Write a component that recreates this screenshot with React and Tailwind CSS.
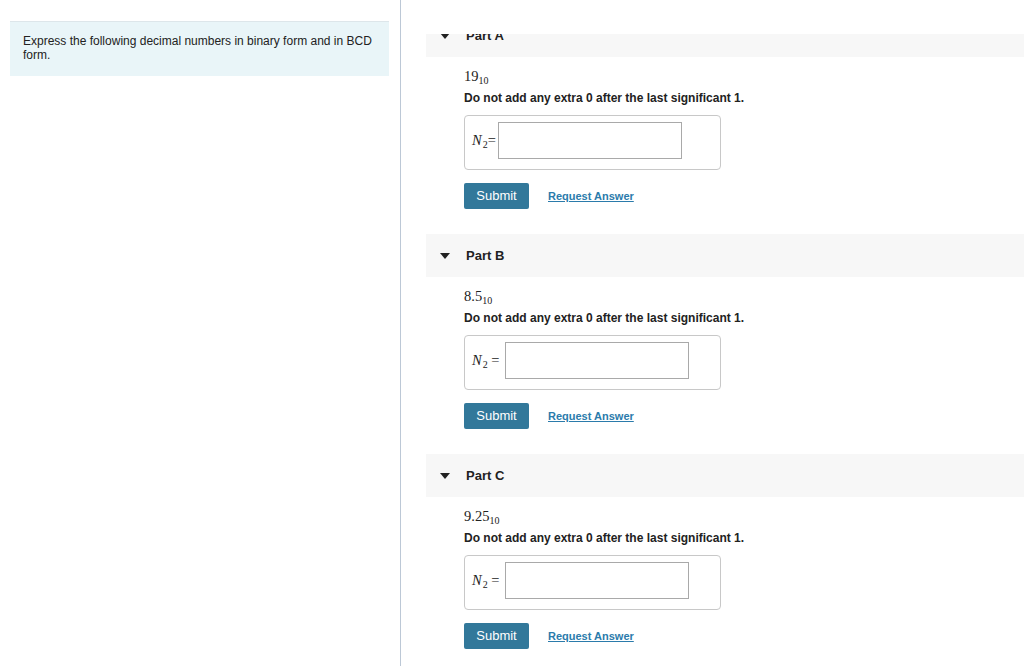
import React from 'react';

const parts = [
    { name: 'Part A', num: '19', eqSpace: false },
    { name: 'Part B', num: '8.5', eqSpace: true },
    { name: 'Part C', num: '9.25', eqSpace: true },
];

const serif = { fontFamily: '"Liberation Serif", "DejaVu Serif", serif' };

const PartBlock = ({ part }) => (
    <div className="mb-[25px]">
        <div className="ml-[25px] h-[43px] bg-[#f7f7f7] flex items-center pl-[14px]">
            <svg width="10" height="6" viewBox="0 0 10 6" className="mr-[16px]">
                <path d="M0 0 L10 0 L5 6 Z" fill="#222" />
            </svg>
            <span className="text-[13px] font-bold text-[#222]">{part.name}</span>
        </div>
        <div className="pl-[63px]">
            <div className="mt-[9px] h-[20px] leading-[20px] text-[14.5px] text-[#222]" style={serif}>
                {part.num}
                <sub className="text-[10px] align-baseline relative top-[3px]">10</sub>
            </div>
            <div className="mt-[5px] leading-[14px] text-[12px] font-bold text-[#222] whitespace-nowrap">
                Do not add any extra 0 after the last significant 1.
            </div>
            <div className="mt-[10px] w-[257px] h-[55px] border border-[#c8c8c8] rounded-[4px] flex items-start pt-[6px] pl-[7px]">
                <span className="text-[14.5px] text-[#222] mt-[8px] whitespace-pre" style={serif}>
                    <i>N</i>
                    <sub className="text-[10px] align-baseline relative top-[3px] ml-[1px]">2</sub>
                    {part.eqSpace ? ' = ' : '='}
                </span>
                <div className="ml-[2px] w-[184px] h-[37px] border border-[#a9a9a9] bg-white"></div>
            </div>
            <div className="mt-[13px] flex items-center">
                <button className="w-[65px] h-[26px] bg-[#32789a] text-white text-[13px] rounded-[2px]">Submit</button>
                <a className="ml-[19px] text-[11px] font-bold text-[#2b7bab] underline">Request Answer</a>
            </div>
        </div>
    </div>
);

const App = () => {
    return (
        <div className="flex h-[666px] w-[1024px] overflow-hidden bg-white" style={{ fontFamily: '"Liberation Sans", Arial, sans-serif' }}>
            <div className="w-[401px] shrink-0 border-r border-[#bcc8d6] pt-[21px] pl-[10px] pr-[11px]">
                <div className="bg-[#e9f5f8] border-t border-[#dde6ea] pt-[12px] pb-[14px] pl-[13px] pr-[8px] text-[12px] leading-[14px] text-[#222]">
                    Express the following decimal numbers in binary form and in BCD form.
                </div>
            </div>
            <div className="flex-1 flex flex-col">
                <div className="h-[34px] shrink-0"></div>
                <div className="flex-1 overflow-hidden">
                    <div className="-mt-[20px]">
                        {parts.map((p) => (
                            <PartBlock key={p.name} part={p} />
                        ))}
                    </div>
                </div>
            </div>
        </div>
    );
};

export default App;
